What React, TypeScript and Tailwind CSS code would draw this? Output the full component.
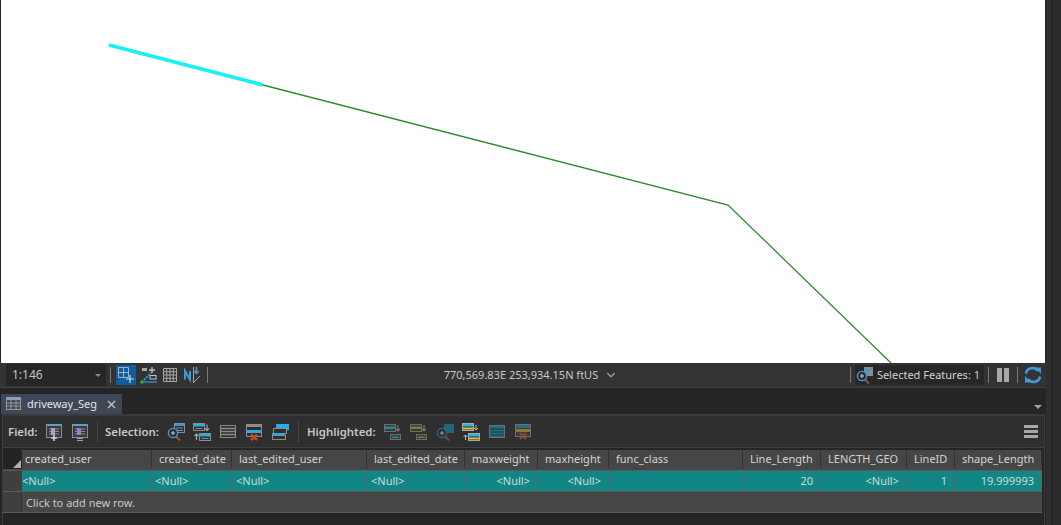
import React from 'react';
import { ChevronDown, X } from 'lucide-react';

const font = { fontFamily: '"Noto Sans", sans-serif' };

interface Column {
  name: string;
  width: number;
  value: string;
  right?: boolean;
  pad?: string;
}

const columns: Column[] = [
  { name: 'created_user', width: 130, value: '<Null>' },
  { name: 'created_date', width: 80, value: '<Null>', pad: 'pl-[3px]' },
  { name: 'last_edited_user', width: 135, value: '<Null>', pad: 'pl-[4px]' },
  { name: 'last_edited_date', width: 98, value: '<Null>', pad: 'pl-[4px]' },
  { name: 'maxweight', width: 73, value: '<Null>', right: true },
  { name: 'maxheight', width: 71, value: '<Null>', right: true },
  { name: 'func_class', width: 134, value: '' },
  { name: 'Line_Length', width: 78, value: '20', right: true },
  { name: 'LENGTH_GEO', width: 86, value: '<Null>', right: true },
  { name: 'LineID', width: 48, value: '1', right: true },
  { name: 'shape_Length', width: 87, value: '19.999993', right: true },
];

function Ico({ children }: { children: React.ReactNode }) {
  return (
    <svg width="20" height="20" viewBox="0 0 20 20" className="shrink-0">
      {children}
    </svg>
  );
}

function Magnifier({ color = '#3d9ad6' }: { color?: string }) {
  return (
    <g>
      <line x1="9.5" y1="14" x2="14" y2="18.5" stroke="#8a5a32" strokeWidth="2" />
      <circle cx="7" cy="11" r="4.6" fill="#2f2f2f" stroke={color} strokeWidth="1.4" />
      <path d="M5 11h4M7 9v4" stroke="#c8c8c8" strokeWidth="1" />
    </g>
  );
}

function FieldIcon({ accent, plus }: { accent: string; plus?: boolean }) {
  return (
    <Ico>
      <rect x="2.5" y="2.5" width="15" height="13" fill="#3a3a3a" stroke="#8c8c8c" />
      <rect x="2" y="2" width="16" height="2" fill="#5f9fc9" />
      <path d="M5 7h10M5 9.5h10M5 12h10" stroke="#8c8c8c" />
      <rect x="7" y="6" width="4" height="7" fill={accent} />
      {plus ? (
        <path d="M10 13v6M7 16h6" stroke="#d0d0d0" strokeWidth="1.6" />
      ) : (
        <path d="M7 16.5h6M7 18.5h6" stroke="#a0a0a0" strokeWidth="1" />
      )}
    </Ico>
  );
}

function SwapIcon({ a, b }: { a: string; b: string }) {
  return (
    <Ico>
      <rect x="1.5" y="1.5" width="11" height="7" fill="#2f2f2f" stroke="#8c8c8c" />
      <rect x="2" y="2" width="10" height="2.5" fill={a} />
      <path d="M3.5 6.5h7" stroke="#8c8c8c" />
      <rect x="7.5" y="11.5" width="11" height="7" fill="#2f2f2f" stroke="#8c8c8c" />
      <rect x="8" y="12" width="10" height="2.5" fill={b} />
      <path d="M9.5 16.5h7" stroke="#8c8c8c" />
      <path d="M15 2.5v6M13 6.5l2 2 2-2" stroke="#a8a8a8" fill="none" strokeWidth="1.2" />
      <path d="M4.5 18v-6M2.5 14l2-2 2 2" stroke="#a8a8a8" fill="none" strokeWidth="1.2" />
    </Ico>
  );
}

function DimSwap({ c }: { c: string }) {
  return (
    <Ico>
      <rect x="1.5" y="2.5" width="11" height="7" fill="#3a3a3a" stroke="#6e6e6e" />
      <rect x="2" y="4.5" width="10" height="2.5" fill={c} />
      <rect x="7.5" y="12.5" width="10" height="5" fill="#3a3a3a" stroke="#6e6e6e" />
      <rect x="9" y="14.5" width="7" height="1.5" fill={c} />
      <path d="M15 3v6M13 7l2 2 2-2" stroke="#7a7a7a" fill="none" strokeWidth="1.2" />
    </Ico>
  );
}

export default function App() {
  return (
    <div className="flex h-[525px] w-[1061px] overflow-hidden bg-[#2a2a2a] text-[11px]" style={font}>
      <div className="flex h-full w-[1046px] shrink-0 flex-col bg-[#252525]">
        {/* Map */}
        <div className="h-[363px] shrink-0 pl-px">
          <div className="h-full w-[1044px] bg-white">
            <svg width="1044" height="363" viewBox="1 0 1044 363">
              <polyline points="263,85 728,205 891,363" fill="none" stroke="#2f8a2a" strokeWidth="1.3" />
              <line x1="109" y1="45" x2="263" y2="85" stroke="#19f0f0" strokeWidth="3.6" />
            </svg>
          </div>
        </div>

        {/* Status bar */}
        <div className="flex h-[25px] shrink-0 items-center border-b border-[#414141] bg-[#333333] pr-[4px] pl-[6px] text-[#d0d0d0]">
          <div className="flex h-[22px] w-[100px] items-center justify-between bg-[#262626] pr-[5px] pl-[6px] text-[12px] text-[#c4c4c4]">
            <span>1:146</span>
            <span className="h-0 w-0 border-x-[3px] border-t-[3px] border-x-transparent border-t-[#8c8c8c]" />
          </div>
          <div className="ml-[4px] h-[16px] w-px bg-[#7a7a7a]" />
          <div className="ml-[5px] flex h-[20px] w-[20px] items-center justify-center bg-[#0f5d9c]">
            <svg width="18" height="18" viewBox="0 0 18 18">
              <path d="M1.5 1.5h10v10h-10zM1.5 6.5h10M6.5 1.5v10" fill="none" stroke="#9fb4c4" />
              <path d="M13 9v8M9 13h8" stroke="#d8d8d8" strokeWidth="1.2" />
            </svg>
          </div>
          <svg width="20" height="20" viewBox="0 0 20 20" className="ml-[3px]">
            <path d="M3 4.5h5" stroke="#a8a8a8" strokeWidth="3" />
            <path d="M13 2v6M10 5h6" stroke="#c4c4c4" strokeWidth="1.3" />
            <rect x="11" y="10.5" width="6" height="3.5" fill="none" stroke="#c4c4c4" />
            <path d="M5 15l7-7" stroke="#2a9fe0" strokeWidth="2" strokeDasharray="2 1" />
            <path d="M4 17h14" stroke="#2a9fe0" strokeWidth="1.2" />
            <rect x="1.5" y="15.5" width="3" height="3" fill="#3fae3f" />
          </svg>
          <svg width="16" height="16" viewBox="0 0 16 16" className="ml-[3px]">
            <path d="M1.5 1.5h13v13h-13zM1.5 4.7h13M1.5 8h13M1.5 11.3h13M4.7 1.5v13M8 1.5v13M11.3 1.5v13" fill="none" stroke="#a8a8a8" />
          </svg>
          <svg width="20" height="20" viewBox="0 0 20 20" className="ml-[5px]">
            <path d="M2 14.5V6l5 8.5V6" fill="none" stroke="#3d9ad6" strokeWidth="2" />
            <path d="M10.5 2v16" stroke="#a8a8a8" />
            <path d="M13.5 2v6.5M11.5 6l2 2.5 2-2.5" fill="none" stroke="#3d9ad6" strokeWidth="1.6" />
            <path d="M11 17l6-6" stroke="#a8a8a8" />
          </svg>
          <div className="ml-[4px] h-[16px] w-px bg-[#7a7a7a]" />
          <div className="flex flex-1 items-center justify-center gap-[6px] pl-[4px] text-[#c8c8c8]">
            <span>770,569.83E 253,934.15N ftUS</span>
            <ChevronDown size={14} strokeWidth={2} className="text-[#a0a0a0]" />
          </div>
          <div className="h-[16px] w-px bg-[#7a7a7a]" />
          <div className="ml-[4px] flex h-[20px] items-center gap-[2px] bg-[#272727] pr-[4px] text-[#d0d0d0]">
            <svg width="20" height="20" viewBox="0 0 20 20">
              <rect x="9" y="2" width="9" height="9" fill="#8c8c8c" />
              <path d="M10 3l3 3v4M17 3l-3 3" stroke="#2a9fe0" strokeWidth="1.2" fill="none" />
              <Magnifier />
            </svg>
            <span>Selected Features: 1</span>
          </div>
          <div className="ml-[4px] h-[16px] w-px bg-[#7a7a7a]" />
          <div className="ml-[8px] flex gap-[2px]">
            <div className="h-[14px] w-[5px] bg-[#a8a8a8]" />
            <div className="h-[14px] w-[5px] bg-[#a8a8a8]" />
          </div>
          <div className="ml-[8px] h-[16px] w-px bg-[#7a7a7a]" />
          <svg width="18" height="18" viewBox="0 0 18 18" className="ml-[6px]">
            <path d="M2 7.5A6.5 6 0 0 1 14 5" fill="none" stroke="#3d9ad6" strokeWidth="2.6" />
            <path d="M11 1.5h6v6.5z" fill="#3d9ad6" />
            <path d="M16 10.5A6.5 6 0 0 1 4 13" fill="none" stroke="#3d9ad6" strokeWidth="2.6" />
            <path d="M7 16.5H1V10z" fill="#3d9ad6" />
          </svg>
        </div>

        {/* Tab strip */}
        <div className="flex h-[26px] shrink-0 items-end justify-between pr-[4px] pl-px">
          <div className="flex h-[20px] w-[121px] items-center bg-[#3e4857] pl-[5px] text-[#e4e4e4]">
            <svg width="15" height="14" viewBox="0 0 15 14">
              <rect x="0.5" y="0.5" width="14" height="12" fill="none" stroke="#9a9a9a" />
              <rect x="1" y="1" width="13" height="2" fill="#7fa6c9" />
              <path d="M1 6h13M1 9h13M5 3v10M10 3v10" stroke="#9a9a9a" />
            </svg>
            <span className="ml-[6px]">driveway_Seg</span>
            <X size={13} strokeWidth={2} className="ml-[8px] text-[#cfcfcf]" />
          </div>
          <span className="mb-[5px] h-0 w-0 border-x-[4px] border-t-[4px] border-x-transparent border-t-[#a0a0a0]" />
        </div>

        {/* Table pane */}
        <div className="mr-px ml-[2px] flex flex-1 flex-col border-x border-t-[2px] border-[#3d3d3d] border-t-[#3a3a3a]">
          {/* Toolbar */}
          <div className="flex h-[32px] shrink-0 items-center border-b border-[#3f3f3f] bg-[#2f2f2f] pl-[5px] text-[11.4px] font-semibold text-[#c8c8c8]">
            <span className="w-[36px]">Field:</span>
            <div className="flex items-center gap-[6px]">
              <FieldIcon accent="#a9a0d8" plus />
              <FieldIcon accent="#8e82d0" />
            </div>
            <div className="mx-[7px] h-[22px] w-px bg-[#444]" />
            <span className="w-[61px]">Selection:</span>
            <div className="flex items-center gap-[6px]">
              <Ico>
                <rect x="8.5" y="1.5" width="10" height="9" fill="#2f2f2f" stroke="#8c8c8c" />
                <rect x="9" y="2" width="9" height="2" fill="#2a9fe0" />
                <path d="M10 6h7M10 8.5h7" stroke="#8c8c8c" />
                <Magnifier />
              </Ico>
              <SwapIcon a="#23aee8" b="#23aee8" />
              <Ico>
                <rect x="2.5" y="3.5" width="15" height="12" fill="#2f2f2f" stroke="#8c8c8c" />
                <path d="M3 6.5h14M3 9.5h14M3 12.5h14" stroke="#8c8c8c" strokeWidth="1.6" />
              </Ico>
              <Ico>
                <rect x="2.5" y="2.5" width="15" height="12" fill="#2f2f2f" stroke="#8c8c8c" />
                <rect x="3" y="3" width="14" height="2" fill="#8c8c8c" />
                <rect x="3" y="8" width="14" height="3" fill="#23aee8" />
                <path d="M7 12.5l6 5.5M13 12.5l-6 5.5" stroke="#c94a1e" strokeWidth="2.4" />
              </Ico>
              <Ico>
                <rect x="6" y="2" width="13" height="6" fill="#23aee8" />
                <rect x="3.5" y="6.5" width="13" height="5" fill="#2f2f2f" stroke="#8c8c8c" />
                <rect x="2" y="11" width="13" height="2" fill="#23aee8" />
                <rect x="2.5" y="13.5" width="13" height="4" fill="#2f2f2f" stroke="#8c8c8c" />
              </Ico>
            </div>
            <div className="mx-[8px] h-[22px] w-px bg-[#444]" />
            <span className="w-[76px]">Highlighted:</span>
            <div className="flex items-center gap-[6px]">
              <DimSwap c="#1d8aa8" />
              <DimSwap c="#8a7a2a" />
              <svg width="20" height="20" viewBox="0 0 20 20" className="shrink-0 opacity-70">
                <rect x="9" y="2" width="10" height="9" fill="#1d7f9a" />
                <Magnifier color="#2a7faf" />
              </svg>
              <Ico>
                <rect x="1.5" y="1.5" width="11" height="7" fill="#2f2f2f" stroke="#a8a8a8" />
                <rect x="2" y="2" width="10" height="2.5" fill="#1fb6e8" />
                <rect x="2" y="5.5" width="10" height="2" fill="#e0c33a" />
                <rect x="7.5" y="11.5" width="11" height="7" fill="#2f2f2f" stroke="#a8a8a8" />
                <rect x="8" y="12" width="10" height="2.5" fill="#1fb6e8" />
                <rect x="8" y="15.5" width="10" height="2" fill="#e0c33a" />
                <path d="M15 3v5M13 6l2 2 2-2M4.5 18v-5M2.5 15l2-2 2 2" stroke="#b8b8b8" fill="none" />
              </Ico>
              <Ico>
                <rect x="2.5" y="3.5" width="15" height="12" fill="#1d6f8a" stroke="#6e6e6e" />
                <path d="M3 7h14M3 10h14M3 13h14" stroke="#2f2f2f" />
              </Ico>
              <Ico>
                <rect x="2.5" y="2.5" width="15" height="12" fill="#3a3a3a" stroke="#6e6e6e" />
                <rect x="3" y="3" width="14" height="3" fill="#1d6f8a" />
                <rect x="3" y="7" width="14" height="3" fill="#8a7a2a" />
                <path d="M7 11l6 6M13 11l-6 6" stroke="#8a4a30" strokeWidth="2.4" />
              </Ico>
            </div>
            <div className="mr-[6px] ml-auto flex w-[14px] flex-col gap-[2px]">
              <div className="h-[3px] bg-[#a8a8a8]" />
              <div className="h-[3px] bg-[#a8a8a8]" />
              <div className="h-[3px] bg-[#a8a8a8]" />
            </div>
          </div>

          {/* Grid */}
          <div className="mt-[2px] flex h-[20px] w-[1039px] shrink-0 bg-[#464646] pb-px text-[#d4d4d4]">
            <div className="relative h-full w-[19px] shrink-0 bg-[#232323]">
              <span className="absolute right-px bottom-[1px] h-0 w-0 border-b-[8px] border-l-[8px] border-b-[#b0b0b0] border-l-transparent" />
            </div>
            {columns.map((col, i) => (
              <div
                key={col.name}
                className={`flex shrink-0 items-center border-r border-[#333] whitespace-nowrap ${i === 0 ? 'pl-[3px]' : 'pl-[7px]'}`}
                style={{ width: col.width }}
              >
                {col.name}
              </div>
            ))}
          </div>
          <div className="flex h-[22px] w-[1039px] shrink-0 border-y border-[#5a5a5a] bg-[#128684] text-[#c9dcdc]">
            <div className="h-full w-[19px] shrink-0 bg-[#3f3f3f]" />
            {columns.map((col) => (
              <div
                key={col.name}
                className={`flex shrink-0 items-center border-r border-[#5e6a6a] pr-[7px] whitespace-nowrap ${col.right ? 'justify-end' : ''} ${col.pad ?? ''}`}
                style={{ width: col.width }}
              >
                {col.value}
              </div>
            ))}
          </div>
          <div className="flex h-[21px] w-[1039px] shrink-0 border-b border-[#5a5a5a] bg-[#474747] text-[#c8c8c8]">
            <div className="h-full w-[19px] shrink-0 border-r border-[#333] bg-[#3f3f3f]" />
            <span className="flex items-center pt-[2px] pl-[4px]">Click to add new row.</span>
          </div>
        </div>
      </div>

      {/* Right rail */}
      <div className="h-full w-[6px] shrink-0 border-r border-[#222] bg-[#2f2f2f]" />
      <div className="h-full flex-1 bg-[#2b2b2b]" />
    </div>
  );
}
